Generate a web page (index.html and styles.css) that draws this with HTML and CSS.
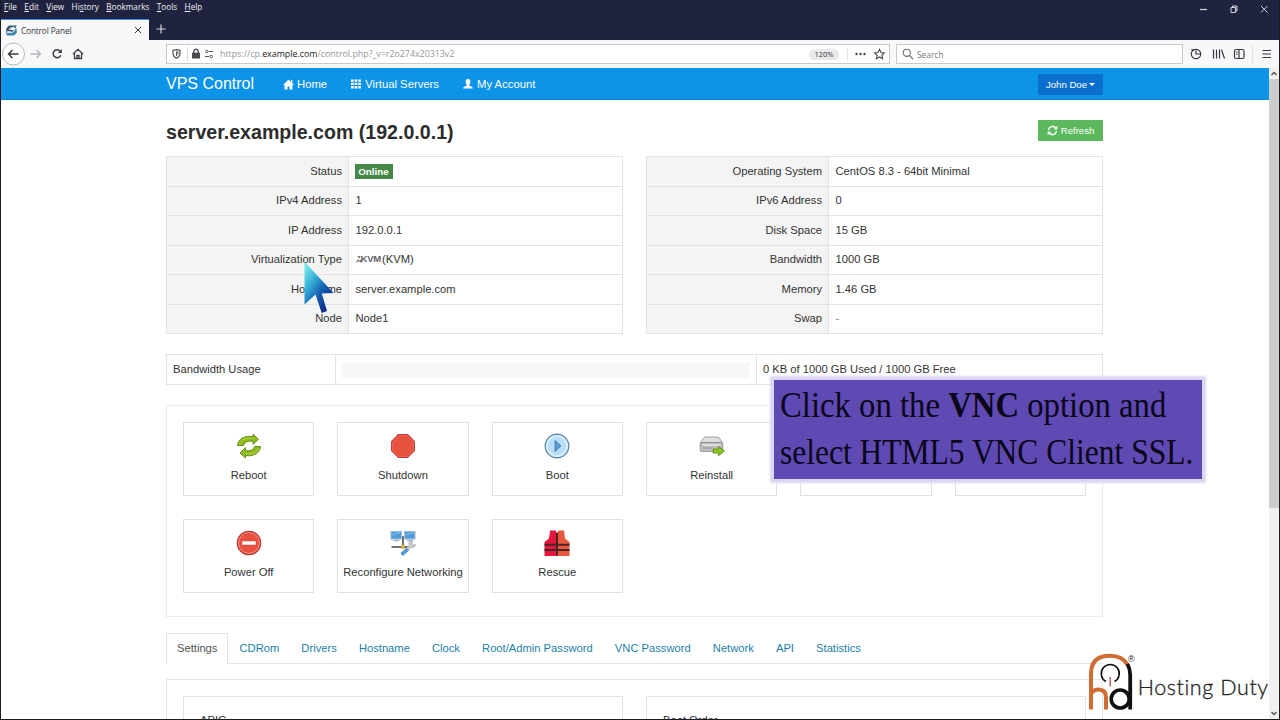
FILE: index.html
```html
<!DOCTYPE html>
<html lang="en">
<head>
    <meta charset="UTF-8">
    <meta name="viewport" content="width=device-width, initial-scale=1.0">
    <title>Control Panel</title>
    <link rel="stylesheet" href="styles.css">
</head>
<body>
<div class="window">
    <!-- Browser menu and window buttons -->
    <div class="menubar">
        <div class="menus">
            <span><u>F</u>ile</span><span><u>E</u>dit</span><span><u>V</u>iew</span><span>Hi<u>s</u>tory</span><span><u>B</u>ookmarks</span><span><u>T</u>ools</span><span><u>H</u>elp</span>
        </div>
        <svg class="win-buttons" width="72" height="10" viewBox="0 0 72 10" fill="none" stroke="#d5d5de">
            <path d="M1 5.5h7" stroke-width="1.2"/>
            <path d="M32 3.5h4.5v5h-4.500zM33.500 3.500v-1.500h4.500v5h-1.500"/>
            <path d="M62 2l6.500 6.500M68.500 2l-6.500 6.500"/>
        </svg>
    </div>
    <div class="tabstrip">
        <div class="browser-tab">
            <svg width="11" height="11" viewBox="0 0 11 11">
                <path d="M.3 10.500V3.500L3 .5h7.700L9.500 3C6.500 2.500 4.500 3 3.500 4.500L8 5.500 6.500 7 1.500 6z" fill="#2e5268"/>
                <path d="M.5 10.500h7.500L10.700 8V3.500L8.700 3.800C8.500 7 5 8 1.500 7.700z" fill="#3b87ad"/>
                <path d="M2 7.200l5 .1L9 4.500M3 5l1.500-2.300 4-.7" fill="none" stroke="#e8f1f6" stroke-width=".9"/>
            </svg>
            <span>Control Panel</span>
            <svg class="close" width="8" height="8" viewBox="0 0 8 8" stroke="#333" fill="none"><path d="M1 1l6 6M7 1L1 7"/></svg>
        </div>
        <svg class="new-tab" width="10" height="10" viewBox="0 0 10 10" stroke="#d5d5de" fill="none"><path d="M5 .5v9M.5 5h9" stroke-width="1.200"/></svg>
    </div>
    <div class="toolbar">
        <svg class="nav-icons" width="90" height="28" viewBox="0 0 90 28" fill="none" stroke="#3c3c40" stroke-width="1.500">
            <circle cx="12.500" cy="14" r="11" fill="#fdfdfd" stroke="#b9b9bd" stroke-width="1"/>
            <path d="M17.500 14H7.500M11.500 10l-4 4 4 4"/>
            <path d="M29.500 14h10M35.500 10l4 4-4 4" stroke="#b8b8bc"/>
            <path d="M59.500 11.500a4 4 0 1 0 .3 3.800"/><path d="M60.800 9v4h-4z" fill="#3c3c40" stroke="none"/>
            <path d="M72 14l5-4.700 5 4.700M73.500 13.500v5h7v-5M76 18.500v-3h2v3" stroke-width="1.300"/>
        </svg>
        <div class="urlbar">
            <svg width="46" height="18" viewBox="0 0 46 18" fill="none" stroke="#55555a">
                <path d="M6 5.300L9.500 4.600l3.500.7v3c0 2.500-1.500 4-3.500 5-2-1-3.500-2.500-3.500-5z" stroke-width="1.200"/><path d="M9.500 6.500v4.500M9.500 7h1.500v2.500"/>
                <path d="M20.500 2v14" stroke="#dcdcdc"/>
                <rect x="25" y="7.700" width="8" height="5.800" fill="#4a4a4f" stroke="none"/><path d="M26.800 8V6.500a2.200 2.200 0 0 1 4.400 0V8" stroke-width="1.400"/>
                <circle cx="39.800" cy="6.500" r="1.300"/><path d="M42 6.500h4M38 11.500h4"/><circle cx="44.200" cy="11.500" r="1.300"/>
            </svg>
            <span class="url">https://cp.<b>example.com</b>/control.php?_v=r2o274x20313v2</span>
            <span class="zoom">120%</span>
            <svg class="url-end" width="38" height="18" viewBox="0 0 38 18">
                <path d="M.5 3v12" stroke="#e4e4e4"/>
                <g fill="#47474b"><circle cx="9.500" cy="9" r="1.200"/><circle cx="13.500" cy="9" r="1.200"/><circle cx="17.500" cy="9" r="1.200"/></g>
                <path d="M32.500 4.300l1.500 3.200 3.400.4-2.500 2.400.7 3.400-3.100-1.700-3.100 1.700.7-3.400-2.500-2.400 3.400-.4z" fill="none" stroke="#47474b" stroke-width="1.100"/>
            </svg>
        </div>
        <div class="searchbar">
            <svg width="12" height="12" viewBox="0 0 12 12" fill="none" stroke="#6b6b70" stroke-width="1.100"><circle cx="4.800" cy="4.800" r="3.600"/><path d="M7.500 7.500l3.500 3.500"/></svg>
            <span>Search</span>
        </div>
        <svg class="tools" width="88" height="28" viewBox="0 0 88 28" fill="none" stroke="#38383d" stroke-width="1.200">
            <circle cx="10" cy="14" r="4.700"/><path d="M10 10.500V14h4M5.300 9.800h3" />
            <path d="M27.500 9.500v9M30.500 9.500v9M33.500 9.500v9M35.500 9.700l3 8.800"/>
            <rect x="48.500" y="9.500" width="9.500" height="9" rx="1.500"/><path d="M53 9.500v9M50 12h1.500M50 14h1.500"/>
            <path d="M66.500 5v18" stroke="#e2e2e2"/>
            <path d="M76.500 10.500h8.500M76.500 14h8.500M76.500 17.500h8.500"/>
        </svg>
    </div>

    <div class="viewport">
        <div class="page">
            <div class="navbar">
                <div class="container nav-row">
                    <span class="brand">VPS Control</span>
                    <a><svg width="11" height="11" viewBox="0 0 11 11" fill="#fff"><path d="M5.500 .5L0 6h1.500v4.500h3v-3h2v3h3V6H11L9.300 4.200V1H8v2z"/></svg>Home</a>
                    <a class="nav-servers"><svg width="10" height="10" viewBox="0 0 10 10" fill="#fff"><path d="M0 .5h2.700v2.300H0zM3.600 .5h2.700v2.300H3.600zM7.200 .5H9.900v2.300H7.200zM0 3.800h2.700v2.300H0zM3.600 3.800h2.700v2.300H3.600zM7.200 3.800H9.900v2.300H7.200zM0 7.100h2.700v2.300H0zM3.600 7.100h2.700v2.300H3.600zM7.200 7.100H9.900v2.300H7.200z"/></svg>Virtual Servers</a>
                    <a class="nav-account"><svg width="10" height="10" viewBox="0 0 10 10" fill="#fff"><path d="M5 0c1.800 0 2.500 1.200 2.400 2.700C7.300 4 6.800 5 6.300 5.500v1C7 7.300 9.800 7.300 9.800 9.600H.2C.2 7.300 3 7.300 3.700 6.500v-1C3.200 5 2.700 4 2.600 2.700 2.500 1.200 3.200 0 5 0z"/></svg>My Account</a>
                    <button class="user-btn">John Doe<i class="caret"></i></button>
                </div>
            </div>

            <div class="container">
                <div class="title-row">
                    <h1>server.example.com (192.0.0.1)</h1>
                    <button class="refresh-btn"><svg width="11" height="11" viewBox="0 0 11 11" fill="none" stroke="#fff" stroke-width="1.500"><path d="M1.500 5a4 4 0 0 1 7-2.200M9.500 6a4 4 0 0 1-7 2.200"/><path d="M10.300 .8v3.700H6.600zM.7 10.200V6.500h3.700z" fill="#fff" stroke="none"/></svg>Refresh</button>
                </div>

                <div class="info">
                    <table>
                        <tr><th>Status</th><td><span class="label">Online</span></td></tr>
                        <tr><th>IPv4 Address</th><td>1</td></tr>
                        <tr><th>IP Address</th><td>192.0.0.1</td></tr>
                        <tr><th>Virtualization Type</th><td><span class="kvm"><svg width="7" height="8" viewBox="0 0 7 8" fill="none" stroke="#777" stroke-width="1.100"><path d="M1.500 1.500h2.300l-1 2M.5 7.500L2 5l1.500 2M4 5l.8 2 1.500-3"/></svg><b>KVM</b>(KVM)</span></td></tr>
                        <tr><th>Hostname</th><td>server.example.com</td></tr>
                        <tr><th>Node</th><td>Node1</td></tr>
                    </table>
                    <table>
                        <tr><th>Operating System</th><td>CentOS 8.3 - 64bit Minimal</td></tr>
                        <tr><th>IPv6 Address</th><td>0</td></tr>
                        <tr><th>Disk Space</th><td>15 GB</td></tr>
                        <tr><th>Bandwidth</th><td>1000 GB</td></tr>
                        <tr><th>Memory</th><td>1.46 GB</td></tr>
                        <tr><th>Swap</th><td class="none">-</td></tr>
                    </table>
                </div>

                <div class="usage">
                    <div>Bandwidth Usage</div>
                    <div><div class="progress"></div></div>
                    <div>0 KB of 1000 GB Used / 1000 GB Free</div>
                </div>

                <div class="actions">
                    <div class="action">
                        <svg width="26" height="26" viewBox="0 0 26 26"><g fill="#8dbb1f" stroke="#5f8a14" stroke-width=".9" stroke-linejoin="round"><path d="M1.500 12.500C2 6 9 2 17 3.800V1l5.500 5.300-5.500 5V8.500C12.500 7.500 8.500 9 7.500 12.500z"/><path d="M24.500 13.500C24 20 17 24 9.500 22.500V25L4 20l5.500-5.500v3C14 18.500 17.500 17 18.500 13.500z"/></g><path d="M3.500 11C5 6.500 11 4 17.500 5.500M22.800 15C21.500 19.500 15 22 9.500 20.500" fill="none" stroke="#b2d748"/></svg>
                        <span>Reboot</span>
                    </div>
                    <div class="action">
                        <svg width="26" height="26" viewBox="0 0 26 26"><path d="M8.200 1h9.600L25 8.200v9.600L17.800 25H8.200L1 17.800V8.200z" fill="#c93a2e"/><path d="M8.800 2.600h8.400l6.200 6.200v8.400l-6.200 6.200H8.800l-6.200-6.200V8.800z" fill="#e9513f" stroke="#f28476" stroke-width=".6"/></svg>
                        <span>Shutdown</span>
                    </div>
                    <div class="action">
                        <svg width="26" height="26" viewBox="0 0 26 26"><circle cx="13" cy="13" r="11.800" fill="#b9defb" stroke="#57829f" stroke-width="1.200"/><circle cx="13" cy="13" r="10" fill="none" stroke="#dcefff" stroke-width="1.500"/><path d="M11 7.500l6 5.500-6 5.500z" fill="#5f9bcd" stroke="#3d79af" stroke-width=".8"/></svg>
                        <span>Boot</span>
                    </div>
                    <div class="action">
                        <svg width="26" height="26" viewBox="0 0 26 26"><path d="M5.500 4h14l4 5.500H1.500z" fill="#dededf" stroke="#929294" stroke-width=".8"/><rect x="1.200" y="9.500" width="22.600" height="9" rx="1" fill="#bdbdbf" stroke="#89898b" stroke-width=".8"/><path d="M3.500 12h18" stroke="#e8e8e8" stroke-width="1.500"/><path d="M4 15h8" stroke="#8d8d8d"/><path d="M14 16h5.500v-2.800L25.500 18l-6 4.800V20H14z" fill="#8fc31f" stroke="#5c8a15" stroke-width=".8"/></svg>
                        <span>Reinstall</span>
                    </div>
                    <div class="action">
                        <svg width="26" height="26" viewBox="0 0 26 26"><rect x="2" y="3" width="22" height="16" fill="#5aa2d8"/></svg>
                        <span>VNC</span>
                    </div>
                    <div class="action">
                        <svg width="26" height="26" viewBox="0 0 26 26"><rect x="5" y="2" width="16" height="22" fill="#ddd"/></svg>
                        <span>Log</span>
                    </div>
                    <div class="action">
                        <svg width="26" height="26" viewBox="0 0 26 26"><circle cx="13" cy="13" r="11.700" fill="#e9503f" stroke="#b93a2e" stroke-width="1.200"/><circle cx="13" cy="13" r="10.400" fill="none" stroke="#f4988b" stroke-width=".9"/><rect x="6" y="11" width="14" height="4" rx=".5" fill="#fff" stroke="#d64335" stroke-width=".5"/></svg>
                        <span>Power Off</span>
                    </div>
                    <div class="action">
                        <svg width="26" height="26" viewBox="0 0 26 26"><path d="M13 6v11M1.500 17H18" stroke="#454545" stroke-width="1.500"/><g fill="#4d9cdb" stroke="#a3bdd3" stroke-width="1.200"><rect x="1" y="1.500" width="10.500" height="7.500"/><rect x="14.500" y="1.500" width="10.500" height="7.500"/></g><path d="M2.200 5l8-2.500M15.700 5l8-2.500" stroke="#86c2ef"/><path d="M3.500 10.500h6M17 10.500h6" stroke="#9fb6ca" stroke-width="1.500"/><rect x="11.500" y="15" width="3" height="4" fill="#e6b53c"/><path d="M21 10.500c-2 1-2.500 3-1.700 4.800L15 19.500l2 2 4.200-4.300c2 .6 4-.4 4.300-2.700l-2.300.8-1.500-1.500 1-2.300z" fill="#c7cdd2" stroke="#8f979e" stroke-width=".6"/><path d="M16.500 18.500L11.500 22.500c-1 1 .5 3.200 2 2.500l5-4.500z" fill="#4b9bdd" stroke="#2f75b0" stroke-width=".6"/></svg>
                        <span>Reconfigure Networking</span>
                    </div>
                    <div class="action">
                        <svg width="26" height="26" viewBox="0 0 26 26"><path d="M6 .5h5.500L13 3v23H.5V12L5 8.500z" fill="#e3173e"/><path d="M20 .5h-5.500L13 3v23h12.500V12L21 8.500z" fill="#e8593c"/><path d="M13 3v22.500M.5 14.800h25M.5 20h25" stroke="#4b2227" stroke-width="2"/></svg>
                        <span>Rescue</span>
                    </div>
                </div>

                <div class="tabs">
                    <a class="active">Settings</a><a>CDRom</a><a>Drivers</a><a>Hostname</a><a>Clock</a><a>Root/Admin Password</a><a>VNC Password</a><a>Network</a><a>API</a><a>Statistics</a>
                </div>

                <div class="settings">
                    <div class="box">APIC</div>
                    <div class="box">Boot Order</div>
                </div>
            </div>
        </div>
        <div class="scrollbar">
            <svg width="10" height="11" viewBox="0 0 10 11" fill="none" stroke="#505050" stroke-width="1.300"><path d="M2.500 7l2.500-2.500L7.500 7"/></svg>
            <div class="thumb"></div>
            <svg width="10" height="11" viewBox="0 0 10 11" fill="none" stroke="#505050" stroke-width="1.300"><path d="M2.500 4L5 6.500 7.500 4"/></svg>
        </div>
    </div>
</div>

<!-- Items lying over the page -->
<svg class="cursor" width="32" height="54" viewBox="0 0 32 54">
    <defs><linearGradient id="cur" x1="0" y1="0" x2=".8" y2="1"><stop offset=".1" stop-color="#6fe3e6"/><stop offset=".35" stop-color="#38b3d8"/><stop offset=".6" stop-color="#1766b4"/><stop offset="1" stop-color="#08207c"/></linearGradient></defs>
    <path d="M1.500 .8L30.500 32 18.800 32.500 24 50 18.700 52 12.500 33.500 1.500 43.500z" fill="url(#cur)"/>
</svg>
<div class="callout">
    <p class="line-1">Click on the <b>VNC</b> option and</p>
    <p class="line-2">select HTML5 VNC Client SSL.</p>
</div>
<div class="watermark">
    <svg width="50" height="60" viewBox="0 0 50 60" fill="none">
        <path d="M4 57.500V22C4 9 11.500 3.800 23 3.800c8 0 14 2.500 17.500 9" stroke="#cf6d32" stroke-width="4"/>
        <path d="M4 42c4-6.500 15-6 15 3v12.500" stroke="#cf6d32" stroke-width="4"/>
        <path d="M40.500 12c2 4 2.700 7 2.700 11v34.500" stroke="#111" stroke-width="3.800"/>
        <circle cx="33.200" cy="47" r="9" stroke="#111" stroke-width="3.600"/>
        <path d="M19 29.500a9 9 0 1 1 8.500 0" stroke="#111" stroke-width="1.600"/>
        <path d="M23.200 25v9.500" stroke="#b34a4a" stroke-width="1.300"/>
    </svg>
    <sup>®</sup>
    <span>Hosting Duty</span>
</div>
</body>
</html>
```
FILE: styles.css
```css
* {
    box-sizing: border-box;
    margin: 0;
    padding: 0;
}

body {
    width: 1280px;
    height: 720px;
    overflow: hidden;
    position: relative;
    font-family: "Liberation Sans", Arial, sans-serif;
    font-size: 11.2px;
    color: #333;
}

svg {
    display: block;
    flex: none;
}

.window {
    height: 720px;
    display: flex;
    flex-direction: column;
    border: solid #1b1b24;
    border-width: 0 1px 1px;
    background: #fff;
}

/* Browser chrome */
.menubar {
    height: 19px;
    display: flex;
    justify-content: space-between;
    background: #20233f;
    font: 8.2px/13px "Open Sans", sans-serif;
    color: #f0f0f4;
}

.menus {
    display: flex;
    gap: 7.4px;
    padding-left: 3px;
}

.menus u {
    text-underline-offset: 1px;
}

.win-buttons {
    margin: 4px 8px 0 0;
}

.tabstrip {
    height: 21px;
    display: flex;
    background: #20233f;
}

.browser-tab {
    width: 148px;
    display: flex;
    align-items: center;
    padding: 0 7px 0 5px;
    background: #f7f8fa;
    border-top: 1.5px solid #3f8fe0;
    font: 8.2px "Open Sans", sans-serif;
    letter-spacing: -.1px;
    color: #333;
}

.browser-tab span {
    margin-left: 4px;
}

.browser-tab .close {
    margin-left: auto;
}

.new-tab {
    margin: 5px 0 0 7px;
}

.toolbar {
    height: 28px;
    display: flex;
    align-items: center;
    background: #f7f8fa;
    font-family: "Open Sans", sans-serif;
}

.urlbar,
.searchbar {
    height: 20px;
    display: flex;
    align-items: center;
    background: #fff;
    border: 1px solid #c9c9cc;
}

.urlbar {
    width: 724px;
    margin-left: 75px;
}

.url {
    margin-left: 7px;
    font-size: 8.85px;
    color: #96969a;
}

.url b {
    font-weight: normal;
    color: #1c1c20;
}

.zoom {
    margin-left: auto;
    width: 30px;
    border-radius: 6px;
    background: #e9e9eb;
    font-size: 7.5px;
    line-height: 11px;
    text-align: center;
}

.url-end {
    margin: 0 4px 0 8px;
}

.searchbar {
    width: 287px;
    margin-left: 6px;
    padding-left: 5px;
    font-size: 8.4px;
    color: #75757a;
}

.searchbar span {
    margin-left: 3px;
}

.tools {
    margin-left: 3px;
}

/* Page */
.viewport {
    flex: 1;
    min-height: 0;
    display: flex;
}

.page {
    flex: 1;
    overflow: hidden;
}

.scrollbar {
    width: 10px;
    background: #f0f0f0;
    display: flex;
    flex-direction: column;
}

.thumb {
    height: 429px;
    background: #cdcdcd;
    margin-bottom: auto;
}

.container {
    width: 937px;
    margin-left: 165px;
}

.navbar {
    height: 32px;
    background: #0d93e8;
    border-bottom: 1px solid #0b84d2;
}

.nav-row {
    height: 32px;
    display: flex;
    align-items: center;
    color: #fff;
}

.brand {
    width: 117px;
    font-size: 16px;
}

.nav-row a {
    display: flex;
    align-items: center;
    gap: 3px;
    font-size: 11.3px;
}

.nav-row .nav-servers {
    margin-left: 24px;
    gap: 4px;
}

.nav-row .nav-account {
    margin-left: 24px;
    gap: 4px;
}

.nav-row button,
.title-row button {
    border: 0;
    height: 21px;
    width: 65px;
    display: flex;
    align-items: center;
    justify-content: center;
    color: #fff;
    font: 9.6px "Liberation Sans", Arial, sans-serif;
}

.nav-row .user-btn {
    margin-left: auto;
    background: #0b6fd0;
}

.caret {
    margin-left: 2px;
    border: solid transparent;
    border-width: 3px 3px 0;
    border-top-color: #fff;
}

.title-row {
    height: 56px;
    display: flex;
    justify-content: space-between;
    padding-top: 20px;
}

h1 {
    font-size: 19.6px;
    line-height: 25px;
    color: #2c2c2c;
}

.title-row .refresh-btn {
    background: #5cb85c;
    gap: 3px;
}

.info {
    display: flex;
    justify-content: space-between;
}

table {
    width: 457px;
    height: 178px;
    border-collapse: collapse;
    table-layout: fixed;
}

tr {
    height: 29.5px;
}

th,
td {
    border: 1px solid #e2e2e2;
    padding: 0 6.5px 1px;
    line-height: 12px;
}

th {
    width: 182px;
    padding-right: 6px;
    background: #f4f4f4;
    font-weight: normal;
    text-align: right;
}

.none {
    color: #888;
}

.label {
    display: block;
    width: 38px;
    margin: 1px 0 0 -1px;
    background: #468847;
    color: #fff;
    font-size: 9.8px;
    font-weight: bold;
    line-height: 15px;
    text-align: center;
}

.kvm {
    display: flex;
    align-items: center;
}

.kvm b {
    margin-left: -2px;
    width: 21.5px;
    font-size: 9.6px;
    letter-spacing: -.3px;
    color: #666;
}

.usage {
    height: 31px;
    margin-top: 20px;
    display: grid;
    grid-template-columns: 168px 421px 1fr;
    align-items: stretch;
    border: 1px solid #e2e2e2;
    line-height: 29px;
}

.usage > div {
    padding: 0 6px;
}

.usage > div + div {
    border-left: 1px solid #e2e2e2;
}

.progress {
    height: 16px;
    margin-top: 7px;
    background: #f7f7f7;
}

.actions {
    height: 212px;
    margin-top: 20px;
    padding: 16px;
    display: grid;
    grid-template-columns: repeat(6, 1fr);
    grid-auto-rows: 74px;
    gap: 23px;
    border: 1px solid #ececec;
}

.action {
    display: flex;
    flex-direction: column;
    align-items: center;
    gap: 10px;
    padding-top: 10px;
    border: 1px solid #e0e0e0;
    white-space: nowrap;
}

.tabs {
    height: 31px;
    margin-top: 16px;
    display: flex;
    border-bottom: 1px solid #e6e6e6;
    line-height: 30px;
    color: #1c7fa8;
}

.tabs a {
    padding: 0 11.05px;
}

.tabs .active {
    height: 31px;
    padding: 0 10px;
    border: 1px solid #e2e2e2;
    border-bottom: 0;
    background: #fff;
    color: #555;
    line-height: 29px;
}

.settings {
    height: 120px;
    margin-top: 15px;
    padding: 16px;
    display: flex;
    justify-content: space-between;
    border: 1px solid #e6e6e6;
}

.box {
    width: 440px;
    padding: 17px 16px;
    border: 1px solid #e2e2e2;
}

/* Overlays */
.cursor {
    position: absolute;
    left: 303px;
    top: 261px;
}

.callout {
    position: absolute;
    left: 774px;
    top: 380px;
    width: 428px;
    height: 99px;
    padding: 3px 6px;
    background: #5f49b3;
    box-shadow: 0 0 2px 4px #dcd6f1;
    color: #0a0618;
    font-family: "Liberation Serif", serif;
    font-size: 35px;
    line-height: 46.5px;
    white-space: nowrap;
}

.callout p {
    width: max-content;
    transform-origin: 0 50%;
}

.line-1 {
    transform: scaleX(.935);
}

.line-2 {
    transform: scaleX(.9);
}

.watermark {
    position: absolute;
    left: 1087px;
    top: 652px;
    display: flex;
    color: #222;
}

.watermark sup {
    margin-left: -9px;
    font-size: 9px;
    line-height: 15px;
    vertical-align: top;
}

.watermark span {
    margin: 20px 0 0 3px;
    font: 300 21.5px/30px Lato, sans-serif;
    letter-spacing: .6px;
    white-space: nowrap;
    -webkit-text-stroke: .3px #222;
}
```
